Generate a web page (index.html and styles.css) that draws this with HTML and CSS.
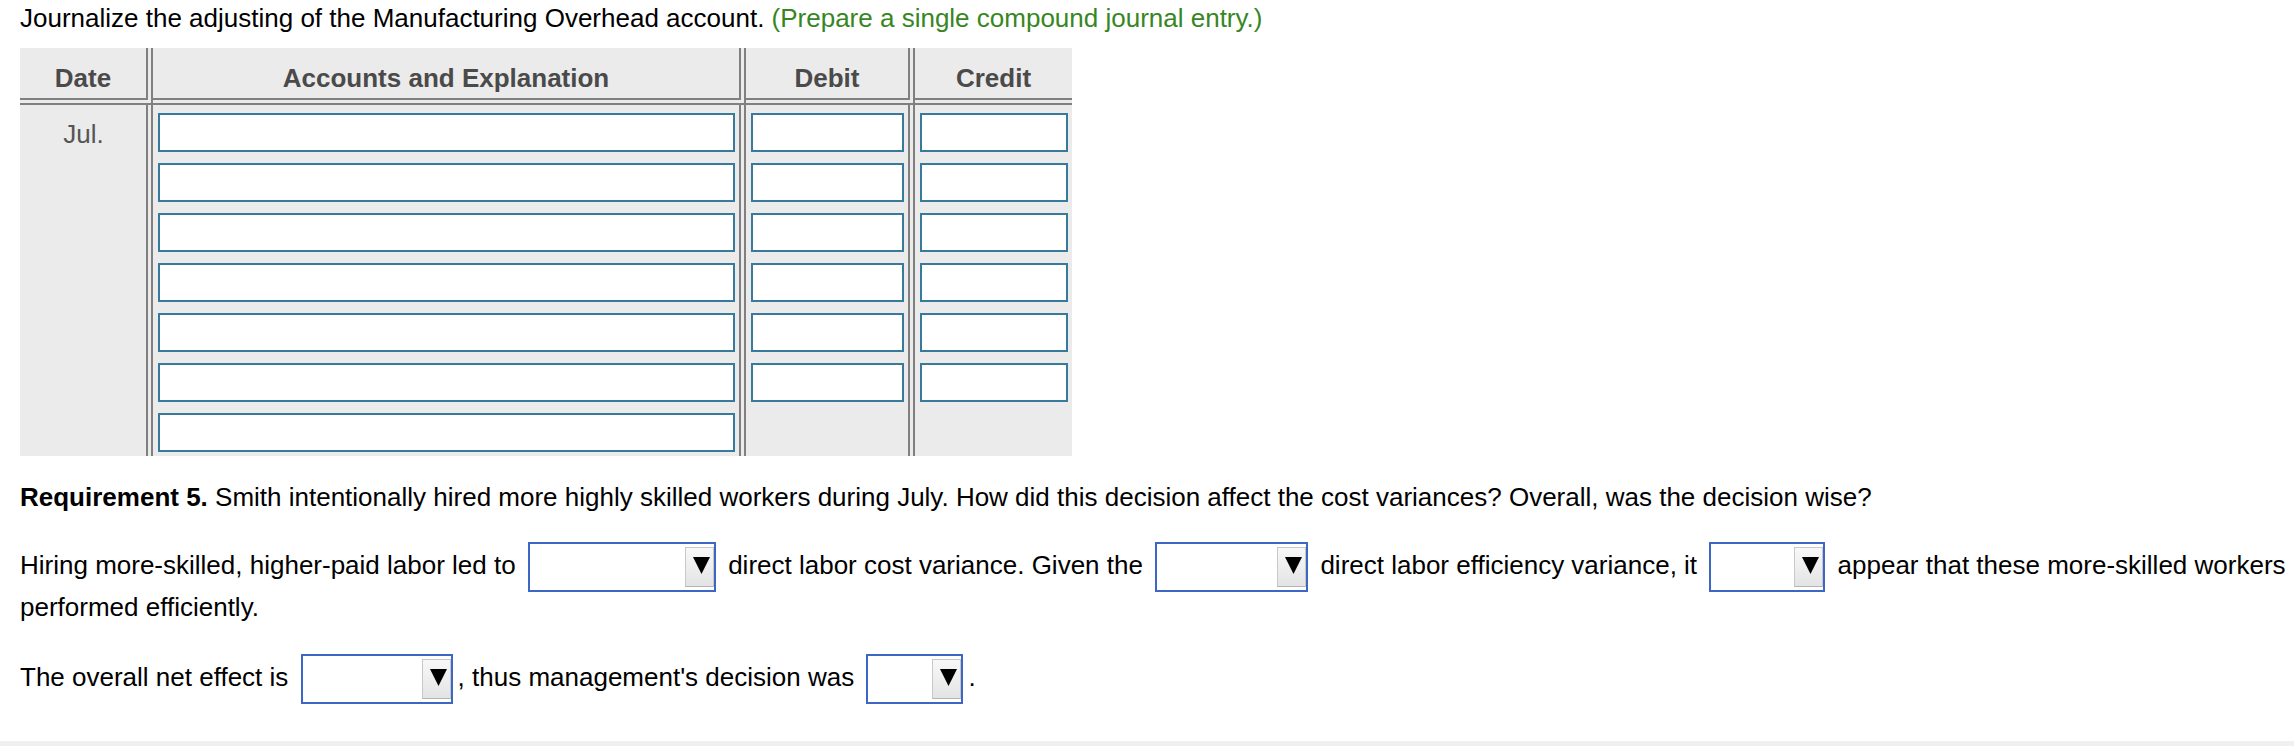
FILE: index.html
```html
<!DOCTYPE html>
<html lang="en">
<head>
    <meta charset="UTF-8">
    <meta name="viewport" content="width=device-width, initial-scale=1.0">
    <title>Journal entry</title>
    <link rel="stylesheet" href="styles.css">
</head>
<body>
    <p class="prompt">Journalize the adjusting of the Manufacturing Overhead account. <span class="hint">(Prepare a single compound journal entry.)</span></p>

    <div class="journal">
      <div class="jh">Date</div>
      <div class="jh">Accounts and Explanation</div>
      <div class="jh">Debit</div>
      <div class="jh last">Credit</div>

      <div class="jc date">
        <div class="month">Jul.</div>
      </div>
      <div class="jc">
        <input type="text" class="cell">
        <input type="text" class="cell">
        <input type="text" class="cell">
        <input type="text" class="cell">
        <input type="text" class="cell">
        <input type="text" class="cell">
        <input type="text" class="cell">
      </div>
      <div class="jc">
        <input type="text" class="cell">
        <input type="text" class="cell">
        <input type="text" class="cell">
        <input type="text" class="cell">
        <input type="text" class="cell">
        <input type="text" class="cell">
      </div>
      <div class="jc last">
        <input type="text" class="cell">
        <input type="text" class="cell">
        <input type="text" class="cell">
        <input type="text" class="cell">
        <input type="text" class="cell">
        <input type="text" class="cell">
      </div>
    </div>

    <p class="req"><b>Requirement 5.</b> Smith intentionally hired more highly skilled workers during July. How did this decision affect the cost variances? Overall, was the decision wise?</p>

    <p class="answer first"><span>Hiring more-skilled, higher-paid labor led to</span> <span class="pick pick-a"><span class="arrow"><svg width="17" height="17" viewBox="0 0 17 17"><polygon points="0,0 17,0 8.5,17"/></svg></span></span> <span>direct labor cost variance. Given the</span> <span class="pick pick-b"><span class="arrow"><svg width="17" height="17" viewBox="0 0 17 17"><polygon points="0,0 17,0 8.5,17"/></svg></span></span> <span>direct labor efficiency variance, it</span> <span class="pick pick-c"><span class="arrow"><svg width="17" height="17" viewBox="0 0 17 17"><polygon points="0,0 17,0 8.5,17"/></svg></span></span> <span>appear that these more-skilled workers</span> <span>performed efficiently.</span></p>

    <p class="answer second"><span>The overall net effect is</span> <span class="pick pick-d"><span class="arrow"><svg width="17" height="17" viewBox="0 0 17 17"><polygon points="0,0 17,0 8.5,17"/></svg></span></span><span>, thus management's decision was</span> <span class="pick pick-e"><span class="arrow"><svg width="17" height="17" viewBox="0 0 17 17"><polygon points="0,0 17,0 8.5,17"/></svg></span></span>.</p>

    <div class="footer"></div>
</body>
</html>
```

FILE: styles.css
```css
body{
  margin: 0;
  padding: 3px 5px 0 20px;
  font-family: "Liberation Sans", Arial, sans-serif;
  font-size: 26px;
  color: #000;
  background: #fff;
}

p{
  margin: 0;
}

.prompt{
  line-height: 30px;
}

.hint{
  color: #378624;
}

/* journal table */
.journal{
  display: grid;
  grid-template-columns: 133px 593px 169px 157px;
  width: 1052px;
  margin-top: 15px;
  background: #ebebeb;
}

.jh{
  box-sizing: border-box;
  height: 57px;
  padding-top: 10px;
  line-height: 40px;
  text-align: center;
  font-weight: bold;
  color: #4a4a4a;
  border-right: 7px double #808080;
  border-bottom: 7px double #808080;
}

.jc{
  box-sizing: border-box;
  display: flex;
  flex-direction: column;
  gap: 11px;
  padding: 8px 4px 4px 5px;
  border-right: 7px double #808080;
}

.jh.last,
.jc.last{
  border-right: none;
}

.jc.date{
  padding-top: 10px;
}

.month{
  line-height: 39px;
  text-align: center;
  color: #555;
}

.cell{
  display: block;
  box-sizing: border-box;
  width: 100%;
  height: 39px;
  margin: 0;
  padding: 0 4px;
  border: 2px solid #387a9b;
  border-radius: 0;
  background: #fff;
  font: inherit;
}

/* requirement text */
.req{
  margin-top: 20px;
  line-height: 42px;
}

.answer{
  line-height: 42px;
}

.answer.first{
  margin-top: 26px;
}

.answer.second{
  margin-top: 28px;
}

.pick{
  display: inline-flex;
  justify-content: flex-end;
  align-items: center;
  box-sizing: border-box;
  height: 50px;
  margin: -10px 5px;
  vertical-align: middle;
  border: 2px solid #3d66c5;
  background: #fff;
}

.pick-a{ width: 188px; }
.pick-b{ width: 153px; }
.pick-c{ width: 116px; }
.pick-d{ width: 152px; }
.pick-e{ width: 97px; }

.arrow{
  box-sizing: border-box;
  display: flex;
  align-items: flex-start;
  width: 29px;
  height: 40px;
  padding: 9px 0 0 7px;
  border: 1.5px solid #c8c8c8;
  border-bottom-color: #b4b4b4;
  background: linear-gradient(#f8f8f8, #e4e4e4);
}

.arrow svg{
  display: block;
  fill: #000;
}

.footer{
  height: 10px;
  margin: 43px -5px 0 -20px;
  background: #f0f0f0;
}
```
